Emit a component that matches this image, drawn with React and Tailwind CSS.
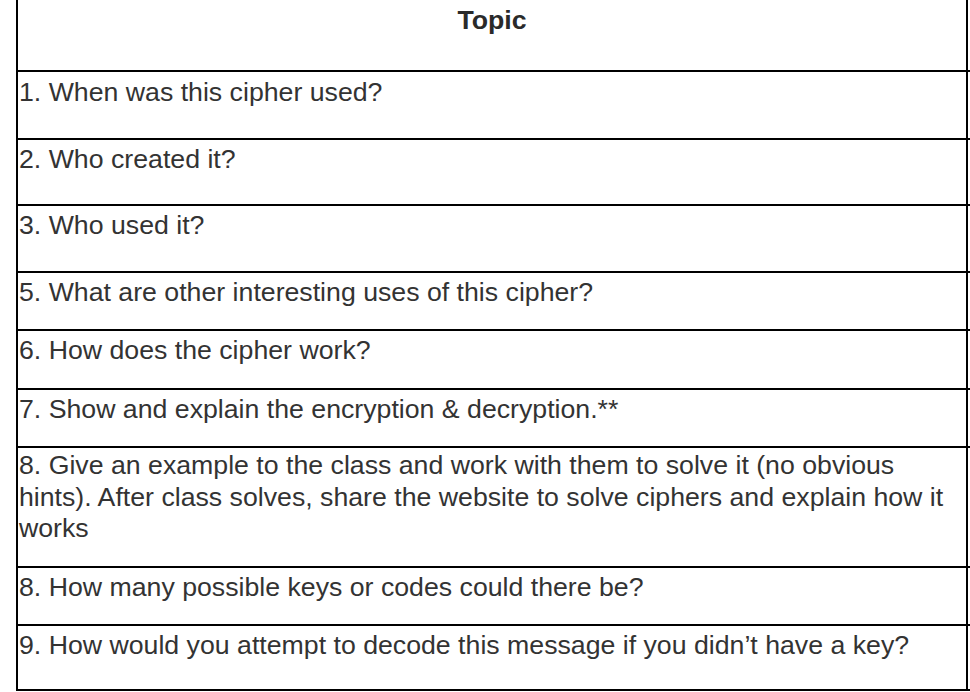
import React from "react";

const rows = [
  { h: "h-[68px]", pt: "pt-[5px]", text: "1. When was this cipher used?" },
  { h: "h-[66px]", pt: "pt-[4px]", text: "2. Who created it?" },
  { h: "h-[67px]", pt: "pt-[4px]", text: "3. Who used it?" },
  { h: "h-[58px]", pt: "pt-[4px]", text: "5. What are other interesting uses of this cipher?" },
  { h: "h-[59px]", pt: "pt-[4px]", text: "6. How does the cipher work?" },
  { h: "h-[58px]", pt: "pt-[4px]", text: "7. Show and explain the encryption & decryption.**" },
  {
    h: "h-[120px]",
    pt: "pt-[2px]",
    text: "8. Give an example to the class and work with them to solve it (no obvious hints). After class solves, share the website to solve ciphers and explain how it works",
  },
  { h: "h-[58px]", pt: "pt-[4px]", text: "8. How many possible keys or codes could there be?" },
  { h: "h-[65px]", pt: "pt-[4px]", text: "9. How would you attempt to decode this message if you didn\u2019t have a key?" },
];

export default function App() {
  return (
    <div
      className="w-[970px] h-[692px] overflow-hidden bg-white text-[#333333]"
      style={{ fontFamily: '"Liberation Sans", Arial, sans-serif' }}
    >
      <div className="ml-[16px] border-l-2 border-black">
        <div className="flex h-[72px] border-b-2 border-black">
          <div className="w-[950px] shrink-0 border-r-2 border-black pt-[5px] text-center text-[26.7px] leading-[31px] font-bold text-[#2a2a2a]">
            Topic
          </div>
          <div className="flex-1" />
        </div>
        {rows.map((r, i) => (
          <div key={i} className={`flex ${r.h} border-b-2 border-black`}>
            <div
              className={`w-[950px] shrink-0 border-r-2 border-black ${r.pt} pl-[1px] pr-[2px] text-[26.7px] leading-[31.5px]`}
            >
              {r.text}
            </div>
            <div className="flex-1" />
          </div>
        ))}
      </div>
    </div>
  );
}
